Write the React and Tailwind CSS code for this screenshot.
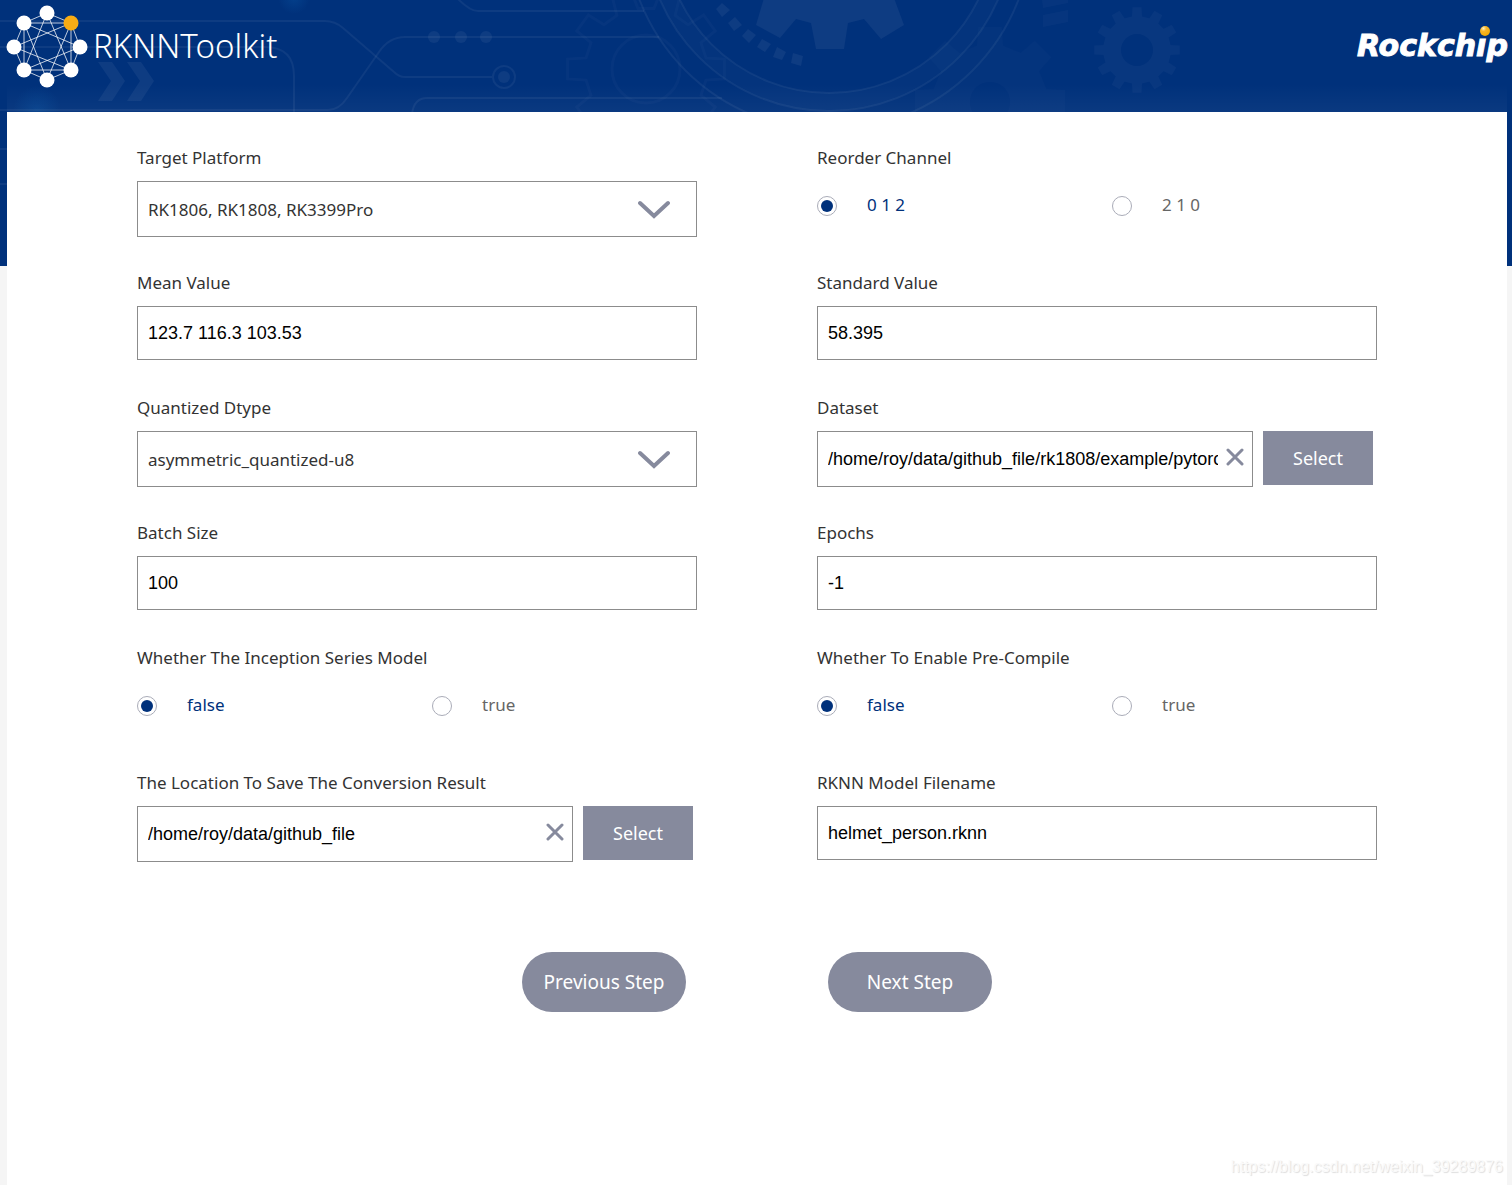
import { useState } from "react";

const NODES = [
  [40, 7], [64, 17], [73, 41], [64, 64], [40, 74], [17, 64], [7, 41], [17, 17],
];

const LINKS = [
  [0, 1], [1, 2], [2, 3], [3, 4], [4, 5], [5, 6], [6, 7], [7, 0],
  [7, 1], [1, 3], [3, 5], [5, 7],
  [0, 3], [1, 4], [2, 5], [3, 6], [4, 7], [5, 0], [6, 1], [7, 2],
];

function gearPath(cx, cy, outer, root, teeth) {
  const step = (Math.PI * 2) / teeth;
  const points = [];
  for (let i = 0; i < teeth; i++) {
    const a = i * step;
    [[root, -0.29], [outer, -0.2], [outer, 0.2], [root, 0.29]].forEach(([r, f]) => {
      points.push(`${(cx + r * Math.cos(a + f * step)).toFixed(1)} ${(cy + r * Math.sin(a + f * step)).toFixed(1)}`);
    });
  }
  return `M${points.join("L")}Z`;
}

function circlePath(cx, cy, r) {
  return `M${cx - r} ${cy}a${r} ${r} 0 1 0 ${r * 2} 0a${r} ${r} 0 1 0 ${-r * 2} 0Z`;
}

function Backdrop() {
  return (
    <svg
      className="absolute inset-x-0 top-0 h-[266px] w-full bg-[#00317b]"
      viewBox="0 0 1512 266"
      preserveAspectRatio="xMidYMin slice"
      aria-hidden="true"
    >
      <defs>
        <radialGradient id="glow">
          <stop offset="0" stopColor="#0a5aa8" stopOpacity="0.35" />
          <stop offset="1" stopColor="#0a5aa8" stopOpacity="0" />
        </radialGradient>
      </defs>
      <circle cx="37" cy="110" r="24" fill="url(#glow)" />
      <circle cx="294" cy="-2" r="16" fill="url(#glow)" />

      <g fill="none" stroke="#fff" strokeOpacity="0.055" strokeWidth="2">
        <path d="M0 21H325Q335 21 343 28L394 72Q399 77 405 77H492" />
        <path d="M0 47H265Q294 47 294 76V120" />
        <path d="M0 110H328Q339 110 347 98L379 52Q389 37 405 37H659" />
        <path d="M458 -1Q470 11 478 11H644" />
        <path d="M412 114Q414 98 427 98H722" />
        <path d="M0 149H8M0 184H8" />
        <circle cx="504" cy="77" r="11" />
        <circle cx="829" cy="-73" r="203" />
        <circle cx="829" cy="-73" r="184" />
        <circle cx="829" cy="-73" r="166" />
      </g>
      <g fill="none" stroke="#fff" strokeOpacity="0.025" strokeWidth="3">
        <path d={gearPath(646, 69, 79, 61, 10)} />
        <circle cx="646" cy="69" r="34" />
      </g>
      <circle cx="829" cy="-73" r="175" fill="none" stroke="#fff" strokeOpacity="0.015" strokeWidth="18" />

      <g fill="#fff" fillOpacity="0.055">
        <path d="M98 62H112L125 81L112 101H98L111 81ZM127 62H141L154 81L141 101H127L140 81Z" />
        <circle cx="434" cy="37" r="6" />
        <circle cx="461" cy="37" r="6" />
        <circle cx="486" cy="37" r="6" />
        <circle cx="504" cy="77" r="6" />
        <path d="M764 -2L756 25L780 38L796 19L811 23L816 49H844L848 23L864 19L881 39L904 25L894 -2Z" />
        <path d="M722 3L730 10L722 17L716 9ZM735 17L742 25L734 31L728 23ZM748 29L756 35L749 43L742 36ZM762 39L771 44L765 52L757 47ZM777 47L786 52L782 60L773 57ZM793 53L803 56L801 66L791 63Z" />
      </g>
      <g fill="#fff" fillRule="evenodd">
        <path fillOpacity="0.03" d={gearPath(1137, 50, 43, 34, 12) + circlePath(1137, 50, 16)} />
        <path fillOpacity="0.015" d={gearPath(990, 102, 76, 58, 8) + circlePath(990, 102, 20)} />
        <path fillOpacity="0.025" d="M1042 0H1068V3L1043 8ZM1043 15L1068 10V22L1043 27Z" />
      </g>
    </svg>
  );
}

function ToolkitLogo() {
  return (
    <svg className="size-20 shrink-0 overflow-visible" viewBox="0 0 80 80" aria-hidden="true">
      <g stroke="#fff" strokeWidth="1" strokeOpacity="0.75">
        {LINKS.map(([a, b]) => (
          <line key={`${a}-${b}`} x1={NODES[a][0]} y1={NODES[a][1]} x2={NODES[b][0]} y2={NODES[b][1]} />
        ))}
      </g>
      {NODES.map(([x, y], i) => (
        <circle key={i} cx={x} cy={y} r="7.5" fill={i === 1 ? "#f8ac14" : "#fff"} />
      ))}
    </svg>
  );
}

function RockchipLogo() {
  return (
    <svg className="h-[42px] w-[150px] shrink-0 overflow-visible" viewBox="0 0 150 42" role="img" aria-label="Rockchip">
      <defs>
        <radialGradient id="ball" cx="0.35" cy="0.25" r="0.8">
          <stop offset="0" stopColor="#fff3c4" />
          <stop offset="0.35" stopColor="#f8b62b" />
          <stop offset="1" stopColor="#f0a800" />
        </radialGradient>
      </defs>
      <text
        x="0"
        y="32"
        fill="#fff"
        stroke="#fff"
        className="font-['DejaVu_Sans',sans-serif] text-[30px] font-bold italic"
      >
        Rockchip
      </text>
      <path d="M119 6H134V14H119Z" fill="#00317b" />
      <circle cx="128" cy="7" r="5" fill="url(#ball)" />
    </svg>
  );
}

function Field({ label, htmlFor, children }) {
  return (
    <div className="min-w-0">
      <label htmlFor={htmlFor} className="mb-[10px] block text-[17px] leading-[26px] text-[#333]">
        {label}
      </label>
      {children}
    </div>
  );
}

function TextField({ id, label, value }) {
  return (
    <Field label={label} htmlFor={id}>
      <input
        id={id}
        type="text"
        defaultValue={value}
        className="h-[54px] w-full border border-[#8c8c8c] bg-white px-[10px] font-['Liberation_Sans',Arial,sans-serif] text-lg text-black outline-none"
      />
    </Field>
  );
}

function SelectField({ id, label, options }) {
  return (
    <Field label={label} htmlFor={id}>
      <div className="relative">
        <select
          id={id}
          className="h-14 w-full appearance-none border border-[#8c8c8c] bg-white px-[10px] pt-[2px] text-[17px] text-[#333] outline-none"
        >
          {options.map((o) => (
            <option key={o}>{o}</option>
          ))}
        </select>
        <svg
          className="pointer-events-none absolute top-[18px] right-[27px] h-5 w-8"
          viewBox="0 0 32 20"
          fill="none"
          stroke="#868a9d"
          strokeWidth="4"
          strokeLinecap="round"
          aria-hidden="true"
        >
          <path d="M2 4L16 17L30 4" />
        </svg>
      </div>
    </Field>
  );
}

function PathField({ id, label, value }) {
  const [path, setPath] = useState(value);

  return (
    <Field label={label} htmlFor={id}>
      <div className="flex items-start gap-[10px] pr-1">
        <div className="flex h-14 min-w-0 flex-1 border border-[#8c8c8c] bg-white pr-2 pl-[10px]">
          <input
            id={id}
            type="text"
            value={path}
            onChange={(e) => setPath(e.target.value)}
            className="min-w-0 flex-1 bg-transparent font-['Liberation_Sans',Arial,sans-serif] text-lg text-black outline-none"
          />
          <button type="button" aria-label="Clear" onClick={() => setPath("")} className="ml-2 pb-1">
            <svg className="size-[18px]" viewBox="0 0 18 18" stroke="#868a9d" strokeWidth="3" strokeLinecap="round">
              <path d="M2 2L16 16M16 2L2 16" />
            </svg>
          </button>
        </div>
        <button type="button" className="h-[54px] w-[110px] shrink-0 bg-[#868a9d] text-lg text-white">
          Select
        </button>
      </div>
    </Field>
  );
}

function RadioField({ name, label, options }) {
  return (
    <fieldset className="min-w-0">
      <legend className="mb-[10px] text-[17px] leading-[26px] text-[#333]">{label}</legend>
      <div className="flex pt-3">
        {options.map((o, i) => (
          <label key={o} className="flex w-[295px] shrink-0 items-start gap-[30px] last:w-auto">
            <input
              type="radio"
              name={name}
              defaultChecked={i === 0}
              className="peer mt-[3px] size-5 appearance-none rounded-full border border-[#aaacb8] bg-clip-content p-[3px] checked:bg-[#00317b]"
            />
            <span className="text-[17px] leading-6 text-[#666] peer-checked:text-[#00317b]">{o}</span>
          </label>
        ))}
      </div>
    </fieldset>
  );
}

function StepButton({ children }) {
  return (
    <button type="button" className="h-[60px] w-[164px] rounded-full bg-[#868a9d] text-[19px] text-white">
      {children}
    </button>
  );
}

export default function App() {
  return (
    <div className="relative min-h-screen bg-[#f5f5f5] font-['Noto_Sans',sans-serif]">
      <Backdrop />
      <div className="relative mr-[5px] ml-[7px] flex min-h-screen flex-col">
        <header className="flex h-28 items-start justify-between bg-linear-to-b from-transparent from-75% to-white/4 pt-[6px]">
          <div className="flex items-center gap-[6px]">
            <ToolkitLogo />
            <h1 className="text-[33px] leading-10 font-light text-white">RKNNToolkit</h1>
          </div>
          <div className="pt-[18px]">
            <RockchipLogo />
          </div>
        </header>

        <main className="flex flex-1 flex-col bg-white pt-[33px]">
          <form className="flex flex-col" onSubmit={(e) => e.preventDefault()}>
            <div className="grid auto-rows-[125px] grid-cols-2 gap-x-[120px] px-[130px]">
              <SelectField id="platform" label="Target Platform" options={["RK1806, RK1808, RK3399Pro"]} />
              <RadioField name="channel" label="Reorder Channel" options={["0 1 2", "2 1 0"]} />
              <TextField id="mean" label="Mean Value" value="123.7 116.3 103.53" />
              <TextField id="std" label="Standard Value" value="58.395" />
              <SelectField id="dtype" label="Quantized Dtype" options={["asymmetric_quantized-u8"]} />
              <PathField id="dataset" label="Dataset" value="/home/roy/data/github_file/rk1808/example/pytorch/dataset.txt" />
              <TextField id="batch" label="Batch Size" value="100" />
              <TextField id="epochs" label="Epochs" value="-1" />
              <RadioField name="inception" label="Whether The Inception Series Model" options={["false", "true"]} />
              <RadioField name="precompile" label="Whether To Enable Pre-Compile" options={["false", "true"]} />
              <PathField id="output" label="The Location To Save The Conversion Result" value="/home/roy/data/github_file" />
              <TextField id="filename" label="RKNN Model Filename" value="helmet_person.rknn" />
            </div>
            <div className="mt-[57px] flex justify-center gap-[142px]">
              <StepButton>Previous Step</StepButton>
              <StepButton>Next Step</StepButton>
            </div>
          </form>

          <p className="mt-auto self-end pr-1 pb-[6px] font-['Liberation_Sans',Arial,sans-serif] text-base text-[#fafafa] [text-shadow:1px_1px_1px_#ddd]">
            https://blog.csdn.net/weixin_39289876
          </p>
        </main>
      </div>
    </div>
  );
}
